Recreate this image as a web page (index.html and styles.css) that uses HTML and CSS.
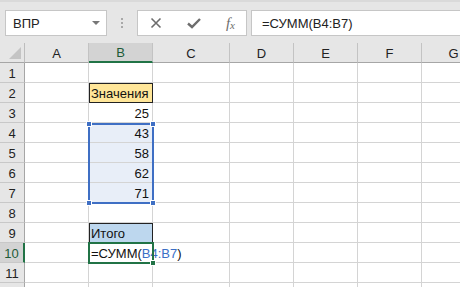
FILE: index.html
```html
<!DOCTYPE html>
<html>
<head>
<meta charset="utf-8">
<link rel="stylesheet" href="styles.css">
</head>
<body>
<div class="app">
  <div class="toolbar">
    <div class="namebox"><span class="name">ВПР</span><span class="caret"></span></div>
    <div class="grip"><i></i><i></i><i></i></div>
    <div class="buttons">
      <svg class="btn" width="14" height="14" viewBox="0 0 14 14"><path d="M2.5 2.5 L11.5 11.5 M11.5 2.5 L2.5 11.5" stroke="#6d6d6d" stroke-width="1.6" fill="none"/></svg>
      <svg class="btn" width="16" height="14" viewBox="0 0 16 14"><path d="M2 7.5 L6 11 L14 3" stroke="#6d6d6d" stroke-width="2.4" fill="none"/></svg>
      <span class="fx"><i>f</i><sub>x</sub></span>
    </div>
    <div class="formula">=СУММ(B4:B7)</div>
  </div>
  <div class="sheet-wrap">
    <div class="sheet">
      <div class="corner"><span class="tri"></span></div>
      <div class="ch">A</div><div class="ch sel">B</div><div class="ch">C</div><div class="ch">D</div><div class="ch">E</div><div class="ch">F</div><div class="ch">G</div>

      <div class="rh">1</div><div class="c"></div><div class="c"></div><div class="c"></div><div class="c"></div><div class="c"></div><div class="c"></div><div class="c"></div>
      <div class="rh">2</div><div class="c"></div><div class="c hdr-y">Значения</div><div class="c"></div><div class="c"></div><div class="c"></div><div class="c"></div><div class="c"></div>
      <div class="rh">3</div><div class="c"></div><div class="c num">25</div><div class="c"></div><div class="c"></div><div class="c"></div><div class="c"></div><div class="c"></div>
      <div class="rh">4</div><div class="c"></div><div class="c num rng">43</div><div class="c"></div><div class="c"></div><div class="c"></div><div class="c"></div><div class="c"></div>
      <div class="rh">5</div><div class="c"></div><div class="c num rng">58</div><div class="c"></div><div class="c"></div><div class="c"></div><div class="c"></div><div class="c"></div>
      <div class="rh">6</div><div class="c"></div><div class="c num rng">62</div><div class="c"></div><div class="c"></div><div class="c"></div><div class="c"></div><div class="c"></div>
      <div class="rh">7</div><div class="c"></div><div class="c num rng">71</div><div class="c"></div><div class="c"></div><div class="c"></div><div class="c"></div><div class="c"></div>
      <div class="rh">8</div><div class="c"></div><div class="c"></div><div class="c"></div><div class="c"></div><div class="c"></div><div class="c"></div><div class="c"></div>
      <div class="rh">9</div><div class="c"></div><div class="c hdr-b">Итого</div><div class="c"></div><div class="c"></div><div class="c"></div><div class="c"></div><div class="c"></div>
      <div class="rh sel">10</div><div class="c"></div><div class="c active">=СУММ(<span class="ref">B4:B7</span>)</div><div class="c"></div><div class="c"></div><div class="c"></div><div class="c"></div><div class="c"></div>
      <div class="rh">11</div><div class="c"></div><div class="c"></div><div class="c"></div><div class="c"></div><div class="c"></div><div class="c"></div><div class="c"></div>
      <div class="rh"></div><div class="c"></div><div class="c"></div><div class="c"></div><div class="c"></div><div class="c"></div><div class="c"></div><div class="c"></div>
    </div>
    <div class="range-box">
      <span class="h tl"></span><span class="h tr"></span><span class="h bl"></span><span class="h br"></span>
    </div>
    <div class="active-box"><span class="fill"></span></div>
  </div>
</div>
</body>
</html>
```
FILE: styles.css
```css
* { box-sizing: border-box; }
html, body { margin: 0; padding: 0; }
body {
  width: 460px;
  height: 287px;
  overflow: hidden;
  background: #e6e6e6;
  font-family: "Liberation Sans", Arial, sans-serif;
}
.app { width: 460px; height: 287px; overflow: hidden; }
.toolbar {
  height: 43px;
  display: flex;
  align-items: flex-start;
  padding: 8px 0 0 5px;
  background: #e6e6e6;
  border-top: 2px solid #dadada;
}
.namebox {
  width: 102px;
  height: 26px;
  background: #fff;
  border: 1px solid #c6c6c6;
  display: flex;
  align-items: center;
  justify-content: space-between;
  padding: 0 6px 0 7px;
}
.name { font-size: 13px; color: #222; }
.caret {
  width: 0; height: 0;
  border-left: 4px solid transparent;
  border-right: 4px solid transparent;
  border-top: 4px solid #777;
}
.grip {
  width: 30px;
  height: 26px;
  display: flex;
  flex-direction: column;
  align-items: center;
  justify-content: center;
  gap: 2px;
}
.grip i { width: 2px; height: 2px; background: #a8a8a8; display: block; }
.buttons {
  width: 110px;
  height: 26px;
  background: #fff;
  border: 1px solid #c6c6c6;
  display: flex;
  align-items: center;
  justify-content: space-between;
  padding: 0 11px 0 11px;
}
.fx { font-family: "Liberation Serif", serif; color: #6d6d6d; font-size: 15px; font-style: italic; }
.fx sub { font-size: 11px; vertical-align: -1px; }
.formula {
  margin-left: 4px;
  flex: 1;
  height: 26px;
  background: #fff;
  border: 1px solid #c6c6c6;
  border-right: none;
  font-size: 13px;
  color: #222;
  padding: 5px 0 0 10px;
}
.sheet-wrap { position: relative; }
.sheet {
  display: grid;
  grid-template-columns: 25px 64px 64px 77px 64px 64px 64px 64px;
  grid-auto-rows: 20px;
  background: #fff;
  font-size: 13px;
}
.corner {
  background: #e6e6e6;
  border-right: 1px solid #bdbdbd;
  border-bottom: 1px solid #a6a6a6;
  position: relative;
}
.tri {
  position: absolute;
  right: 3px; bottom: 3px;
  width: 0; height: 0;
  border-left: 12px solid transparent;
  border-bottom: 12px solid #c4c4c4;
}
.ch {
  background: #e6e6e6;
  border-right: 1px solid #c3c3c3;
  border-bottom: 1px solid #a6a6a6;
  display: flex;
  align-items: center;
  justify-content: center;
  color: #222;
  padding-top: 1px;
}
.ch.sel {
  background: #d3d3d3;
  border-bottom: 2px solid #217346;
  color: #1e5b38;
}
.rh {
  background: #e6e6e6;
  border-right: 1px solid #a6a6a6;
  border-bottom: 1px solid #c8c8c8;
  display: flex;
  align-items: center;
  justify-content: center;
  color: #222;
  padding-top: 1px;
}
.rh.sel {
  background: #d3d3d3;
  border-right: 2px solid #217346;
  color: #1e5b38;
}
.c {
  border-right: 1px solid #d4d4d4;
  border-bottom: 1px solid #d4d4d4;
  padding: 3px 2px 0 2px;
  color: #111;
  white-space: nowrap;
  line-height: 16px;
}
.num { text-align: right; padding-right: 3px; }
.rng { background: #e8eef8; }
.hdr-y { background: #ffe699; outline: 1px solid #222; outline-offset: -1px; border-color: #222; }
.hdr-b { background: #bdd7ee; outline: 1px solid #222; outline-offset: -1px; border-color: #222; }
.ref { color: #3b6fc6; }
.range-box {
  position: absolute;
  left: 88px; top: 80px;
  width: 66px; height: 81px;
  border: 2px solid #3f6fc4;
}
.h {
  position: absolute;
  width: 6px; height: 6px;
  background: #3f6fc4;
  border: 1px solid #fff;
}
.tl { left: -4px; top: -4px; }
.tr { right: -4px; top: -4px; }
.bl { left: -4px; bottom: -4px; }
.br { right: -4px; bottom: -4px; }
.active-box {
  position: absolute;
  left: 88px; top: 199px;
  width: 66px; height: 22px;
  border: 2px solid #217346;
}
.fill {
  position: absolute;
  right: -4px; bottom: -4px;
  width: 6px; height: 6px;
  background: #217346;
  border: 1px solid #fff;
}
```
